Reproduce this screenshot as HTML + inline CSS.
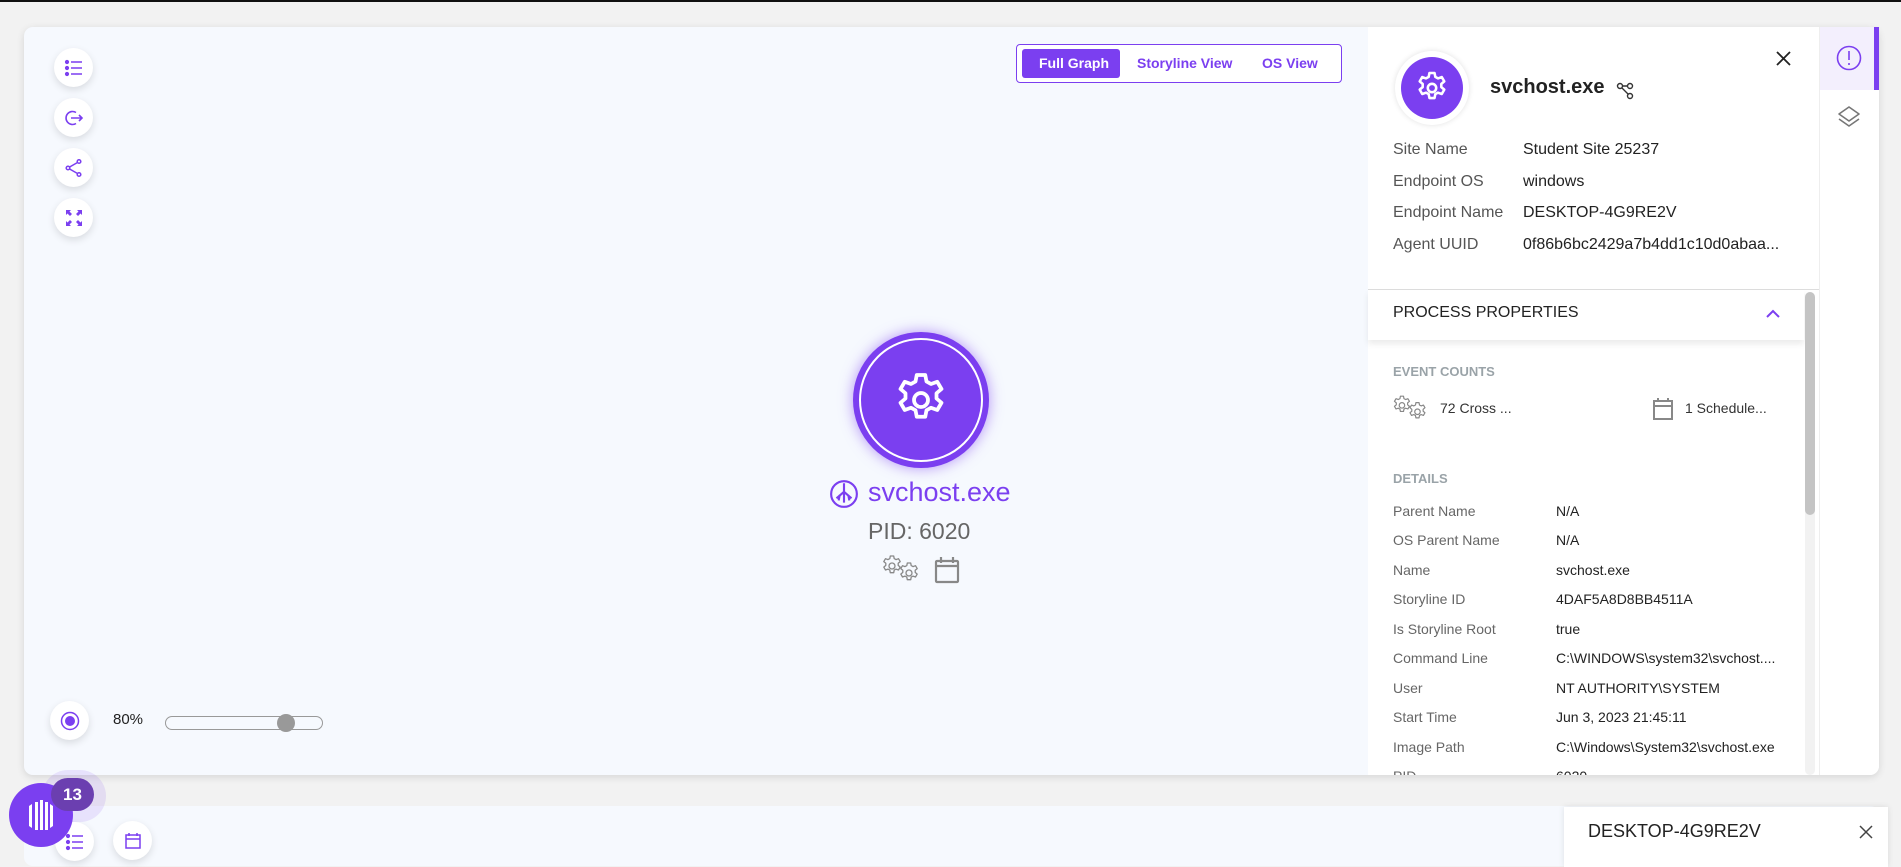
<!DOCTYPE html>
<html><head><meta charset="utf-8"><style>
*{box-sizing:border-box;margin:0;padding:0}
body{width:1901px;height:856px;overflow:hidden;background:#f2f2f2;font-family:"Liberation Sans",sans-serif;position:relative;color:#222}
.abs{position:absolute}
.topline{left:0;top:0;width:1901px;height:2px;background:#111}
.card{left:24px;top:27px;width:1855px;height:748px;background:#f6f9fe;border-radius:9px;box-shadow:0 2px 8px rgba(0,0,0,.12);overflow:hidden}
.btn{width:39px;height:39px;border-radius:50%;background:#fff;box-shadow:0 3px 8px rgba(0,0,0,.12);display:flex;align-items:center;justify-content:center}
.tog{left:1016px;top:44px;width:326px;height:39px;border:1.5px solid #7b3ff0;border-radius:4px;background:#fff}
.tog span{position:absolute;top:0;font-size:14px;font-weight:bold;color:#7b3ff0;line-height:36px}
.panel{left:1368px;top:27px;width:451px;height:748px;background:#fff}
.side{left:1819px;top:27px;width:60px;height:748px;background:#fff;border-left:1px solid #eee;border-radius:0 9px 9px 0}
.lbl{font-size:16px;color:#555}
.val{font-size:16px;color:#222}
.dl{font-size:14px;color:#666}
.dv{font-size:14px;color:#222}
</style></head><body>
<svg width="0" height="0" style="position:absolute"><defs><path id="g" d="M10.3 2h3.4l.5 2.6 1.8 1 2.5-.9 1.7 2.9-2 1.7v2.1l2 1.7-1.7 2.9-2.5-.9-1.8 1-.5 2.6h-3.4l-.5-2.6-1.8-1-2.5.9-1.7-2.9 2-1.7V9.3l-2-1.7 1.7-2.9 2.5.9 1.8-1z"/></defs></svg>
<div class="abs topline"></div>
<div class="abs card"></div>
<div class="abs btn" style="left:54px;top:48px"><svg width="20" height="20" viewBox="0 0 20 20" fill="none" stroke="#7b3ff0" stroke-width="1.6"><circle cx="3" cy="4" r="1.3" fill="#7b3ff0"/><circle cx="3" cy="10" r="1.3" fill="#7b3ff0"/><circle cx="3" cy="16" r="1.3" fill="#7b3ff0"/><path d="M7 4h11M7 10h11M7 16h11"/></svg></div>
<div class="abs btn" style="left:54px;top:98px"><svg width="20" height="20" viewBox="0 0 20 20" fill="none" stroke="#7b3ff0" stroke-width="1.6"><path d="M12 4.5A6.5 6.5 0 1 0 12 15.5"/><path d="M7 10h11M15 7l3 3-3 3"/></svg></div>
<div class="abs btn" style="left:54px;top:148px"><svg width="20" height="20" viewBox="0 0 20 20" fill="none" stroke="#7b3ff0" stroke-width="1.5"><circle cx="15" cy="3.5" r="1.8"/><circle cx="15" cy="16.5" r="1.8"/><circle cx="4" cy="10" r="1.8"/><path d="M5.6 9 13.5 4.5M5.6 11l7.9 4.5"/></svg></div>
<div class="abs btn" style="left:54px;top:198px"><svg width="18" height="18" viewBox="0 0 18 18" fill="#7b3ff0"><path d="M1 1h5L4.5 2.5 7 5 5 7 2.5 4.5 1 6zM17 1v5l-1.5-1.5L13 7l-2-2 2.5-2.5L12 1zM1 17v-5l1.5 1.5L5 11l2 2-2.5 2.5L6 17zM17 17h-5l1.5-1.5L11 13l2-2 2.5 2.5L17 12z"/></svg></div>
<div class="abs tog"><div class="abs" style="left:5px;top:4px;width:98px;height:29px;background:#7b3ff0;border-radius:3px"></div>
<span style="left:22px;color:#fff">Full Graph</span><span style="left:120px">Storyline View</span><span style="left:245px">OS View</span></div>
<div class="abs" style="left:853px;top:332px;width:136px;height:136px;border-radius:50%;background:#7b3ff0;box-shadow:0 0 14px rgba(123,63,240,.55)"></div>
<div class="abs" style="left:859px;top:338px;width:124px;height:124px;border-radius:50%;border:2.5px solid #fff"></div>
<svg class="abs" style="left:891px;top:370px" width="60" height="60" viewBox="0 0 24 24" fill="none" stroke="#fff" stroke-width="1.5" stroke-linejoin="round"><use href="#g"/><circle cx="12" cy="12" r="2.8"/></svg>
<svg class="abs" style="left:829px;top:479px" width="30" height="30" viewBox="0 0 28 28" fill="none" stroke="#7b3ff0" stroke-width="2"><circle cx="14" cy="14" r="12"/><path d="M14 4v18M14 12l-7 6M14 12l7 6M10 15l-1 5M18 15l1 5"/></svg>
<div class="abs" style="left:868px;top:477px;font-size:27px;color:#7b3ff0">svchost.exe</div>
<div class="abs" style="left:868px;top:518px;font-size:23px;color:#666">PID: 6020</div>
<svg class="abs" style="left:880px;top:554px" width="46" height="32" viewBox="0 0 46 32" fill="none" stroke="#888" stroke-width="1.3" stroke-linejoin="round"><g transform="translate(0,0) scale(1.0)"><use href="#g"/><circle cx="12" cy="12" r="3"/></g><g transform="translate(17,7) scale(1.0)"><use href="#g"/><circle cx="12" cy="12" r="3"/></g></svg>
<svg class="abs" style="left:934px;top:556px" width="26" height="28" viewBox="0 0 26 28" fill="none" stroke="#888" stroke-width="2.2"><rect x="2" y="5" width="22" height="21" rx="1"/><path d="M2 10h22M7 1v6M19 1v6"/></svg>
<div class="abs btn" style="left:50px;top:701px"><svg width="20" height="20"><circle cx="10" cy="10" r="8.5" fill="none" stroke="#7b3ff0" stroke-width="1.5"/><circle cx="10" cy="10" r="5" fill="#7b3ff0"/></svg></div>
<div class="abs" style="left:113px;top:711px;font-size:15px;color:#222">80%</div>
<div class="abs" style="left:165px;top:716px;width:158px;height:14px;border:1.3px solid #999;border-radius:7px;background:#f6f9fe"></div>
<div class="abs" style="left:277px;top:714px;width:18px;height:18px;border-radius:50%;background:#999"></div>
<div class="abs" style="left:24px;top:806px;width:1855px;height:60px;background:#f6f9fe;border-radius:9px"></div>
<div class="abs btn" style="left:55px;top:822px"><svg width="20" height="20" viewBox="0 0 20 20" fill="none" stroke="#7b3ff0" stroke-width="1.6"><circle cx="3" cy="4" r="1.3" fill="#7b3ff0"/><circle cx="3" cy="10" r="1.3" fill="#7b3ff0"/><circle cx="3" cy="16" r="1.3" fill="#7b3ff0"/><path d="M7 4h11M7 10h11M7 16h11"/></svg></div>
<div class="abs btn" style="left:113px;top:821px"><svg width="18" height="18" viewBox="0 0 18 18" fill="none" stroke="#7b3ff0" stroke-width="1.5"><rect x="2" y="3" width="14" height="13"/><path d="M2 7h14M5 1v3M13 1v3"/></svg></div>
<div class="abs" style="left:42px;top:770px;width:64px;height:52px;border-radius:26px;background:rgba(123,63,240,.12)"></div>
<div class="abs" style="left:9px;top:783px;width:64px;height:64px;border-radius:50%;background:#7b3ff0"></div>
<svg class="abs" style="left:26px;top:796px" width="30" height="40" viewBox="0 0 30 40" fill="#fff"><path d="M3 10l3-2v24l-3-2zM9 6h3v28h-3zM14 4h3v30h-3zM19 6h3v28h-3zM24 8l3 2v20l-3 2z"/></svg>
<div class="abs" style="left:51px;top:778px;width:43px;height:33px;border-radius:17px;background:#6b3fb0;color:#fff;font-weight:bold;font-size:17px;text-align:center;line-height:33px">13</div>
<div class="abs" style="left:1564px;top:807px;width:324px;height:60px;background:#fff;box-shadow:0 0 6px rgba(0,0,0,.1)"></div>
<div class="abs" style="left:1588px;top:821px;font-size:18px;color:#222">DESKTOP-4G9RE2V</div>
<svg class="abs" style="left:1859px;top:825px" width="14" height="14" stroke="#444" stroke-width="1.5"><path d="M1 1l12 12M13 1 1 13"/></svg>
<div class="abs panel"></div>
<div class="abs side"></div>
<div class="abs" style="left:1820px;top:27px;width:59px;height:63px;background:#f3effd"></div>
<div class="abs" style="left:1874px;top:27px;width:5px;height:63px;background:#7b3ff0"></div>
<svg class="abs" style="left:1836px;top:45px" width="26" height="26" fill="none" stroke="#7b3ff0" stroke-width="1.6"><circle cx="13" cy="13" r="11.5"/><path d="M13 6v9M13 18v2"/></svg>
<svg class="abs" style="left:1836px;top:105px" width="26" height="26" fill="none" stroke="#777" stroke-width="1.6" stroke-linejoin="round"><path d="M13 2 23 9 13 16 3 9z"/><path d="M3 14l10 7 10-7"/></svg>
<div class="abs" style="left:1395px;top:51px;width:74px;height:74px;border-radius:50%;background:#fff;box-shadow:0 0 6px rgba(0,0,0,.12)"></div>
<div class="abs" style="left:1401px;top:57px;width:62px;height:62px;border-radius:50%;background:#7b3ff0"></div>
<svg class="abs" style="left:1414px;top:70px" width="36" height="36" viewBox="0 0 24 24" fill="none" stroke="#fff" stroke-width="1.7" stroke-linejoin="round"><use href="#g"/><circle cx="12" cy="12" r="2.8"/></svg>
<div class="abs" style="left:1490px;top:76px;font-size:20px;font-weight:bold;color:#222">svchost.exe</div>
<svg class="abs" style="left:1616px;top:81px" width="20" height="20" fill="none" stroke="#333" stroke-width="1.4"><circle cx="4" cy="5" r="2.5"/><circle cx="14" cy="5" r="2.5"/><circle cx="14" cy="15" r="2.5"/><path d="M6.5 5h5M6 7l6 6"/></svg>
<svg class="abs" style="left:1776px;top:51px" width="15" height="15" stroke="#222" stroke-width="1.8"><path d="M1 1l13 13M14 1 1 14"/></svg>
<div class="abs lbl" style="left:1393px;top:141px">Site Name</div><div class="abs val" style="left:1523px;top:141px">Student Site 25237</div>
<div class="abs lbl" style="left:1393px;top:173px">Endpoint OS</div><div class="abs val" style="left:1523px;top:173px">windows</div>
<div class="abs lbl" style="left:1393px;top:204px">Endpoint Name</div><div class="abs val" style="left:1523px;top:204px">DESKTOP-4G9RE2V</div>
<div class="abs lbl" style="left:1393px;top:236px">Agent UUID</div><div class="abs val" style="left:1523px;top:236px">0f86b6bc2429a7b4dd1c10d0abaa...</div>
<div class="abs" style="left:1368px;top:289px;width:451px;height:1px;background:#ddd"></div>
<div class="abs" style="left:1368px;top:290px;width:436px;height:50px;background:#fff;box-shadow:0 4px 6px rgba(0,0,0,.08)"></div>
<div class="abs" style="left:1393px;top:304px;font-size:16px;color:#222">PROCESS PROPERTIES</div>
<svg class="abs" style="left:1765px;top:309px" width="16" height="10" fill="none" stroke="#7b3ff0" stroke-width="2"><path d="M2 8l6-6 6 6"/></svg>
<div class="abs" style="left:1805px;top:292px;width:10px;height:483px;background:#f2f2f2;border-radius:5px"></div>
<div class="abs" style="left:1805px;top:292px;width:10px;height:223px;background:#c4c4c4;border-radius:5px"></div>
<div class="abs" style="left:1393px;top:364px;font-size:13px;font-weight:bold;color:#9aa3a8">EVENT COUNTS</div>
<svg class="abs" style="left:1391px;top:394px" width="42" height="30" viewBox="0 0 46 32" fill="none" stroke="#888" stroke-width="1.3" stroke-linejoin="round"><use href="#g"/><circle cx="12" cy="12" r="3"/><g transform="translate(17,7)"><use href="#g"/><circle cx="12" cy="12" r="3"/></g></svg>
<div class="abs" style="left:1440px;top:400px;font-size:14px;color:#333">72 Cross ...</div>
<svg class="abs" style="left:1652px;top:397px" width="22" height="24" fill="none" stroke="#888" stroke-width="2"><rect x="2" y="4" width="18" height="18"/><path d="M2 9h18M6 1v4M16 1v4"/></svg>
<div class="abs" style="left:1685px;top:400px;font-size:14px;color:#333">1 Schedule...</div>
<div class="abs" style="left:1393px;top:471px;font-size:13px;font-weight:bold;color:#9aa3a8">DETAILS</div>
<div class="abs dl" style="left:1393px;top:503px">Parent Name</div><div class="abs dv" style="left:1556px;top:503px">N/A</div>
<div class="abs dl" style="left:1393px;top:532px">OS Parent Name</div><div class="abs dv" style="left:1556px;top:532px">N/A</div>
<div class="abs dl" style="left:1393px;top:562px">Name</div><div class="abs dv" style="left:1556px;top:562px">svchost.exe</div>
<div class="abs dl" style="left:1393px;top:591px">Storyline ID</div><div class="abs dv" style="left:1556px;top:591px">4DAF5A8D8BB4511A</div>
<div class="abs dl" style="left:1393px;top:621px">Is Storyline Root</div><div class="abs dv" style="left:1556px;top:621px">true</div>
<div class="abs dl" style="left:1393px;top:650px">Command Line</div><div class="abs dv" style="left:1556px;top:650px">C:\WINDOWS\system32\svchost....</div>
<div class="abs dl" style="left:1393px;top:680px">User</div><div class="abs dv" style="left:1556px;top:680px">NT AUTHORITY\SYSTEM</div>
<div class="abs dl" style="left:1393px;top:709px">Start Time</div><div class="abs dv" style="left:1556px;top:709px">Jun 3, 2023 21:45:11</div>
<div class="abs dl" style="left:1393px;top:739px">Image Path</div><div class="abs dv" style="left:1556px;top:739px">C:\Windows\System32\svchost.exe</div>
<div class="abs" style="left:1368px;top:766px;width:436px;height:9px;overflow:hidden"><div class="abs dl" style="left:25px;top:2px">PID</div><div class="abs dv" style="left:188px;top:2px">6020</div></div>
</body></html>
